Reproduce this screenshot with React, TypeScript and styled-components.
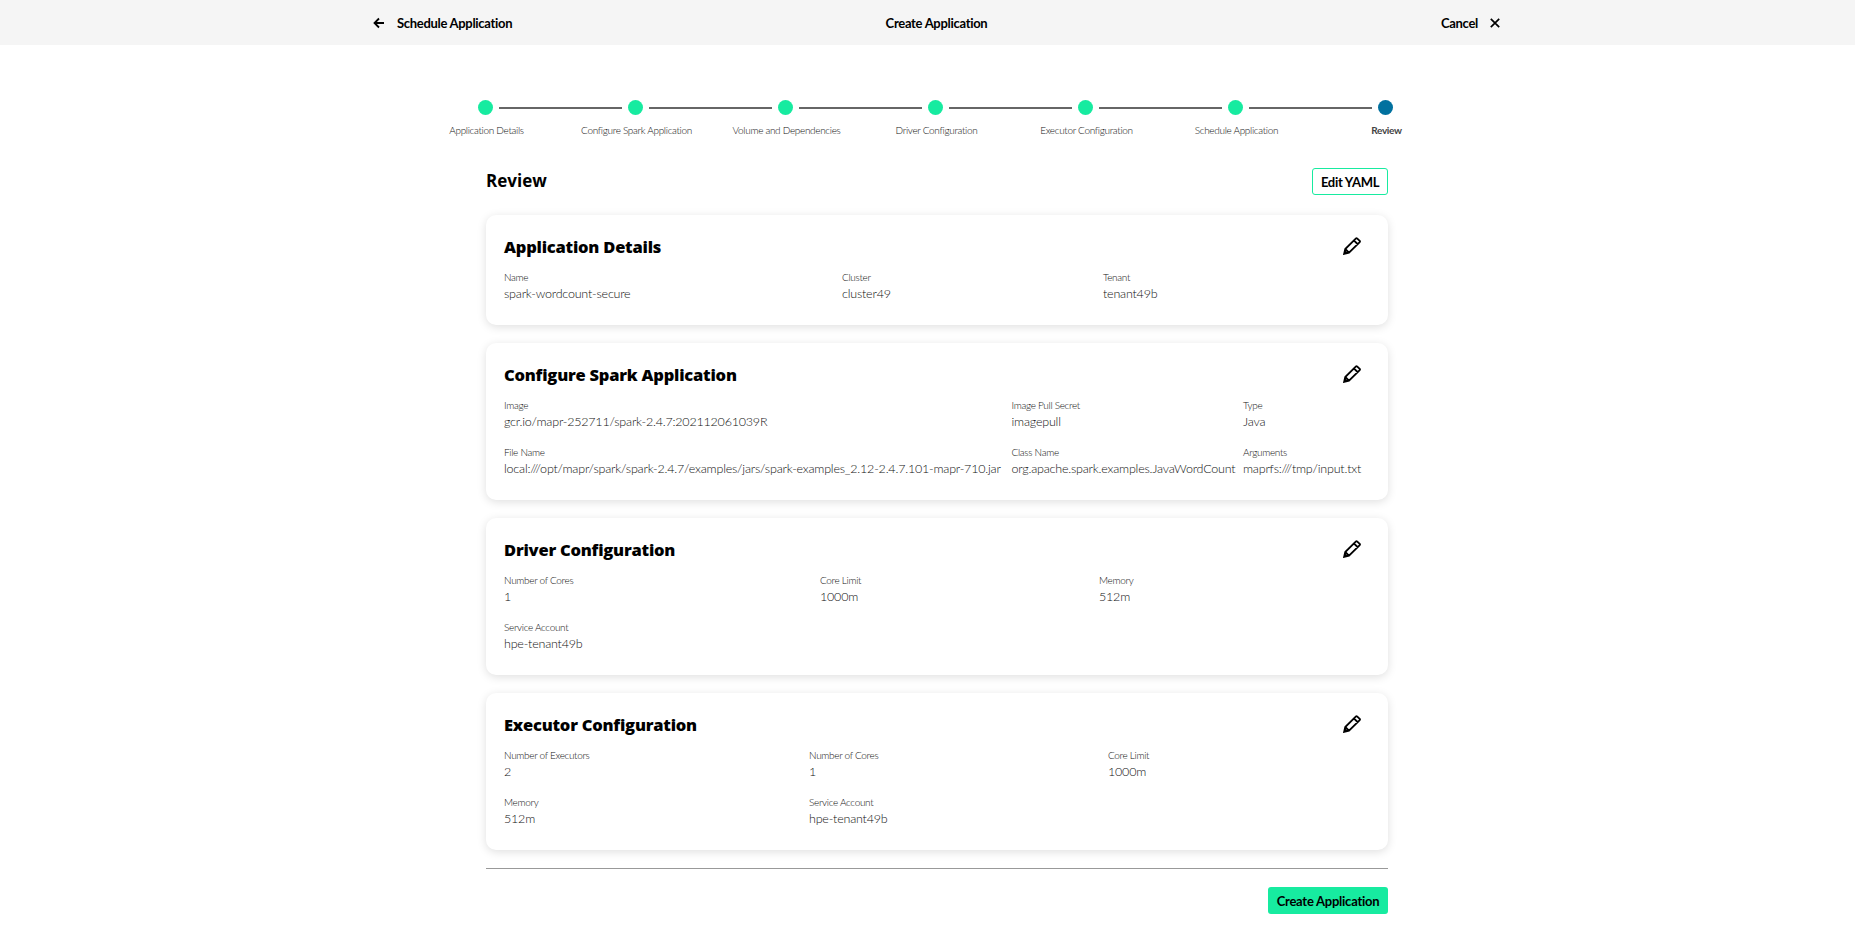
import React from "react";
import styled, { createGlobalStyle } from "styled-components";

const GlobalStyle = createGlobalStyle`
  html, body {
    margin: 0;
    padding: 0;
    background: #fff;
    font-family: Lato, "Liberation Sans", sans-serif;
    color: #000;
  }
`;

const TopBar = styled.header`
  height: 45px;
  background: #f5f5f5;
  padding: 0 355px 0 373px;
  display: grid;
  grid-template-columns: 1fr auto 1fr;
  align-items: center;
  font-size: 13px;
  font-weight: 700;
  letter-spacing: -0.3px;
`;

const TopLink = styled.div<{ $end?: boolean }>`
  display: flex;
  align-items: center;
  gap: 12px;
  justify-content: ${(p) => (p.$end ? "flex-end" : "flex-start")};
  svg {
    display: block;
  }
`;

const Main = styled.main`
  width: 1050px;
  margin-left: 410px;
  padding-top: 55px;
`;

const Stepper = styled.ol`
  display: grid;
  grid-template-columns: repeat(7, 150px);
  list-style: none;
  margin: 0;
  padding: 0;
`;

const Step = styled.li`
  display: flex;
  flex-direction: column;
  align-items: center;
`;

const DotRow = styled.div`
  width: 100%;
  display: flex;
  align-items: center;
  gap: 6px;
`;

const Line = styled.span<{ $hidden?: boolean }>`
  flex: 1;
  height: 2px;
  background: ${(p) => (p.$hidden ? "transparent" : "#666")};
`;

const Dot = styled.span<{ $current?: boolean }>`
  width: 15px;
  height: 15px;
  border-radius: 50%;
  background: ${(p) => (p.$current ? "#01719f" : "#17eba0")};
`;

const StepLabel = styled.span<{ $current?: boolean }>`
  margin: 7px 0 0 3px;
  font-size: 10px;
  line-height: 16px;
  letter-spacing: -0.32px;
  color: ${(p) => (p.$current ? "#444" : "#111")};
  font-weight: ${(p) => (p.$current ? 700 : 300)};
  white-space: nowrap;
`;

const Content = styled.section`
  width: 902px;
  margin-left: 76px;
  padding-top: 30px;
`;

const ReviewHead = styled.div`
  display: flex;
  align-items: center;
  justify-content: space-between;
  height: 27px;
  margin-bottom: 20px;
`;

const ReviewTitle = styled.h2`
  margin: 0 0 3px;
  font-family: "Open Sans", sans-serif;
  font-size: 17px;
  font-weight: 700;
`;

const OutlineButton = styled.button`
  width: 76px;
  height: 27px;
  padding: 0;
  border: 1.5px solid #17eba0;
  border-radius: 3px;
  background: #fff;
  font: 700 13px Lato, sans-serif;
  letter-spacing: -0.3px;
  color: #000;
`;

const Card = styled.article`
  position: relative;
  padding: 19px 18px 22px;
  margin-bottom: 18px;
  border-radius: 10px;
  background: #fff;
  box-shadow: 0 2px 10px rgba(0, 0, 0, 0.13);
`;

const CardHead = styled.div`
  display: flex;
  align-items: center;
  justify-content: space-between;
  height: 24px;
  margin-bottom: 12px;
  padding-right: 9px;
`;

const CardTitle = styled.h3`
  margin: 0;
  font-family: "Open Sans", sans-serif;
  font-size: 16.5px;
  font-weight: 800;
  letter-spacing: -0.22px;
`;

const EditIcon = styled.svg`
  width: 18px;
  height: 18px;
  display: block;
`;

const Fields = styled.div<{ $columns: string }>`
  display: grid;
  grid-template-columns: ${(p) => p.$columns};
  row-gap: 14px;
`;

const Field = styled.div`
  min-width: 0;
  white-space: nowrap;
`;

const FieldLabel = styled.div`
  font-size: 10px;
  line-height: 14px;
  letter-spacing: -0.32px;
  color: #111;
  font-weight: 300;
`;

const FieldValue = styled.div`
  font-size: 12.5px;
  line-height: 19px;
  letter-spacing: -0.2px;
  color: #111;
  font-weight: 300;
`;

const Footer = styled.div`
  border-top: 1px solid #999;
  margin-top: 18px;
  padding-top: 18px;
  display: flex;
  justify-content: flex-end;
`;

const PrimaryButton = styled.button`
  width: 120px;
  height: 27px;
  padding: 0;
  border: none;
  border-radius: 3px;
  background: #17eba0;
  font: 700 13px Lato, sans-serif;
  letter-spacing: -0.25px;
  color: #000;
`;

const steps = [
  "Application Details",
  "Configure Spark Application",
  "Volume and Dependencies",
  "Driver Configuration",
  "Executor Configuration",
  "Schedule Application",
  "Review",
];

const cards = [
  {
    title: "Application Details",
    columns: "338px 261px 1fr",
    fields: [
      ["Name", "spark-wordcount-secure"],
      ["Cluster", "cluster49"],
      ["Tenant", "tenant49b"],
    ],
  },
  {
    title: "Configure Spark Application",
    columns: "507.5px 231.5px 1fr",
    fields: [
      ["Image", "gcr.io/mapr-252711/spark-2.4.7:202112061039R"],
      ["Image Pull Secret", "imagepull"],
      ["Type", "Java"],
      ["File Name", "local:///opt/mapr/spark/spark-2.4.7/examples/jars/spark-examples_2.12-2.4.7.101-mapr-710.jar"],
      ["Class Name", "org.apache.spark.examples.JavaWordCount"],
      ["Arguments", "maprfs:///tmp/input.txt"],
    ],
  },
  {
    title: "Driver Configuration",
    columns: "316px 279px 1fr",
    fields: [
      ["Number of Cores", "1"],
      ["Core Limit", "1000m"],
      ["Memory", "512m"],
      ["Service Account", "hpe-tenant49b"],
    ],
  },
  {
    title: "Executor Configuration",
    columns: "305px 299px 1fr",
    fields: [
      ["Number of Executors", "2"],
      ["Number of Cores", "1"],
      ["Core Limit", "1000m"],
      ["Memory", "512m"],
      ["Service Account", "hpe-tenant49b"],
    ],
  },
];

const Pencil = () => (
  <EditIcon viewBox="0 0 24 24" fill="none" stroke="#000" strokeWidth="2.4">
    <path d="M14.5 4.5l5.5 5.5M22.3 5.3c.4.4.4 1 0 1.4L8 21l-6.5 1.5L3 16 17.3 1.7c.4-.4 1-.4 1.4 0l3.6 3.6zM3 16l5 5" />
    <path d="M1 23l1.6-5.4 3.8 3.8z" fill="#000" stroke="none" />
  </EditIcon>
);

export default function App() {
  return (
    <>
      <GlobalStyle />
      <TopBar>
        <TopLink>
          <svg width="12" height="12" viewBox="0 0 12 12" fill="none" stroke="#000" strokeWidth="1.8">
            <path d="M11 6H1.5M6 1.5L1.5 6 6 10.5" />
          </svg>
          <span>Schedule Application</span>
        </TopLink>
        <span>Create Application</span>
        <TopLink $end>
          <span>Cancel</span>
          <svg width="10" height="10" viewBox="0 0 10 10" fill="none" stroke="#000" strokeWidth="1.7">
            <path d="M.8.8l8.4 8.4M9.2.8L.8 9.2" />
          </svg>
        </TopLink>
      </TopBar>
      <Main>
        <Stepper>
          {steps.map((step, i) => {
            const current = i === steps.length - 1;
            return (
              <Step key={step}>
                <DotRow>
                  <Line $hidden={i === 0} />
                  <Dot $current={current} />
                  <Line $hidden={current} />
                </DotRow>
                <StepLabel $current={current}>{step}</StepLabel>
              </Step>
            );
          })}
        </Stepper>
        <Content>
          <ReviewHead>
            <ReviewTitle>Review</ReviewTitle>
            <OutlineButton>Edit YAML</OutlineButton>
          </ReviewHead>
          {cards.map((card) => (
            <Card key={card.title}>
              <CardHead>
                <CardTitle>{card.title}</CardTitle>
                <Pencil />
              </CardHead>
              <Fields $columns={card.columns}>
                {card.fields.map(([label, value]) => (
                  <Field key={label}>
                    <FieldLabel>{label}</FieldLabel>
                    <FieldValue>{value}</FieldValue>
                  </Field>
                ))}
              </Fields>
            </Card>
          ))}
          <Footer>
            <PrimaryButton>Create Application</PrimaryButton>
          </Footer>
        </Content>
      </Main>
    </>
  );
}
